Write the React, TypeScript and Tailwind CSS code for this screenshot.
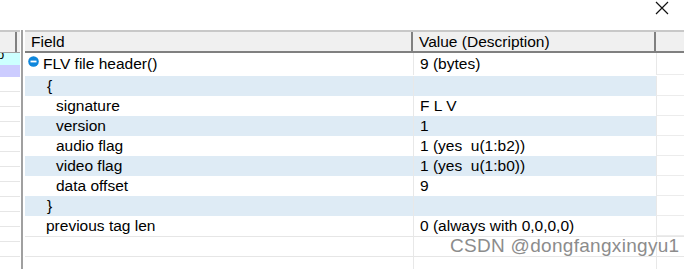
const rows: { field: string; value: string; indent: number; blue: boolean; icon?: boolean; tall?: boolean }[] = [
  { field: 'FLV file header()', value: '9 (bytes)', indent: 43, blue: false, icon: true, tall: true },
  { field: '{', value: '', indent: 47, blue: true },
  { field: 'signature', value: 'F L V', indent: 56, blue: false },
  { field: 'version', value: '1', indent: 56, blue: true },
  { field: 'audio flag', value: '1 (yes  u(1:b2))', indent: 56, blue: false },
  { field: 'video flag', value: '1 (yes  u(1:b0))', indent: 56, blue: true },
  { field: 'data offset', value: '9', indent: 56, blue: false },
  { field: '}', value: '', indent: 47, blue: true },
  { field: 'previous tag len', value: '0 (always with 0,0,0,0)', indent: 46, blue: false },
];

function MinusIcon() {
  return (
    <svg width="11" height="11" viewBox="0 0 11 11" className="absolute left-[3px] top-[3px]">
      <circle cx="5.5" cy="5.5" r="5.3" fill="#0e86dc" />
      <rect x="2.5" y="4.6" width="6" height="1.8" fill="#ffffff" />
    </svg>
  );
}

function LeftStrip() {
  const lines = Array.from({ length: 12 });
  return (
    <div className="w-[20px] shrink-0 flex flex-col overflow-hidden">
      <div className="h-[23px] shrink-0 flex border-t-2 border-t-[#c8c8c8] border-b border-b-[#a0a0a0] bg-[#f0f0f0]">
        <div className="w-[17px] border-r-2 border-r-[#808080]" />
      </div>
      <div className="h-[12px] shrink-0 bg-[#ccffff] relative overflow-hidden">
        <span className="absolute left-[-3px] top-[-5px] text-[13px] leading-none text-black">o</span>
      </div>
      <div className="h-[12px] shrink-0 bg-[#ccccff]" />
      {lines.map((_, i) => (
        <div key={i} className="h-[15px] shrink-0 border-b border-b-[#e6e6e6]" />
      ))}
    </div>
  );
}

export default function App() {
  return (
    <div className="w-[684px] h-[269px] bg-white overflow-hidden relative text-black" style={{ fontFamily: '"Liberation Sans", Arial, sans-serif' }}>
      <div className="h-[30px] flex justify-end pr-[15px] pt-[1px]">
        <svg width="14" height="14" viewBox="0 0 14 14">
          <path d="M1 1 L13 13 M13 1 L1 13" stroke="#111" strokeWidth="1.2" />
        </svg>
      </div>
      <div className="flex h-[239px]">
        <LeftStrip />
        <div className="w-[5px] shrink-0 flex">
          <div className="w-[1px] bg-white" />
          <div className="w-[2px] bg-[#a0a0a0]" />
          <div className="w-[2px] bg-white" />
        </div>
        <div className="flex-1 flex flex-col text-[15.5px]">
          <div className="h-[23px] shrink-0 flex bg-[#f0f0f0] border-t-2 border-t-[#c8c8c8] border-b-2 border-b-[#808080] leading-[20px]">
            <div className="w-[388px] pl-[6px] border-r-2 border-r-[#808080]">Field</div>
            <div className="w-[243px] pl-[6px] border-r-2 border-r-[#808080]">Value (Description)</div>
            <div className="flex-1" />
          </div>
          {rows.map((r, i) => (
            <div key={i} className={`${r.tall ? 'h-[23px] items-end pb-[1px]' : 'h-[20px] items-center'} shrink-0 flex`}>
              <div className={`w-[388px] h-full relative flex items-center ${r.blue ? 'bg-[#deebf5]' : 'bg-white'}`}>
                {r.icon && <MinusIcon />}
                <span className="whitespace-pre" style={{ paddingLeft: r.indent - 25 }}>{r.field}</span>
              </div>
              <div className={`w-[243px] h-full flex items-center pl-[6px] border-l border-l-[#e8e8e8] whitespace-pre ${r.blue ? 'bg-[#deebf5]' : 'bg-white'}`}>
                {r.value}
              </div>
              <div className="flex-1 h-full border-l border-l-[#e8e8e8] border-b border-b-[#ececec]" />
            </div>
          ))}
          {[0, 1].map((i) => (
            <div key={i} className="h-[20px] shrink-0 flex border-t border-t-[#e6e6e6]">
              <div className="w-[388px]" />
              <div className="w-[243px] border-l border-l-[#e8e8e8]" />
              <div className="flex-1 border-l border-l-[#e8e8e8]" />
            </div>
          ))}
        </div>
      </div>
      <div className="absolute left-[450px] top-[236px] text-[19px] leading-none text-[#8c8c8c] tracking-[0.3px]" style={{ textShadow: '0 0 2px #fff' }}>
        CSDN @dongfangxingyu1
      </div>
    </div>
  );
}
